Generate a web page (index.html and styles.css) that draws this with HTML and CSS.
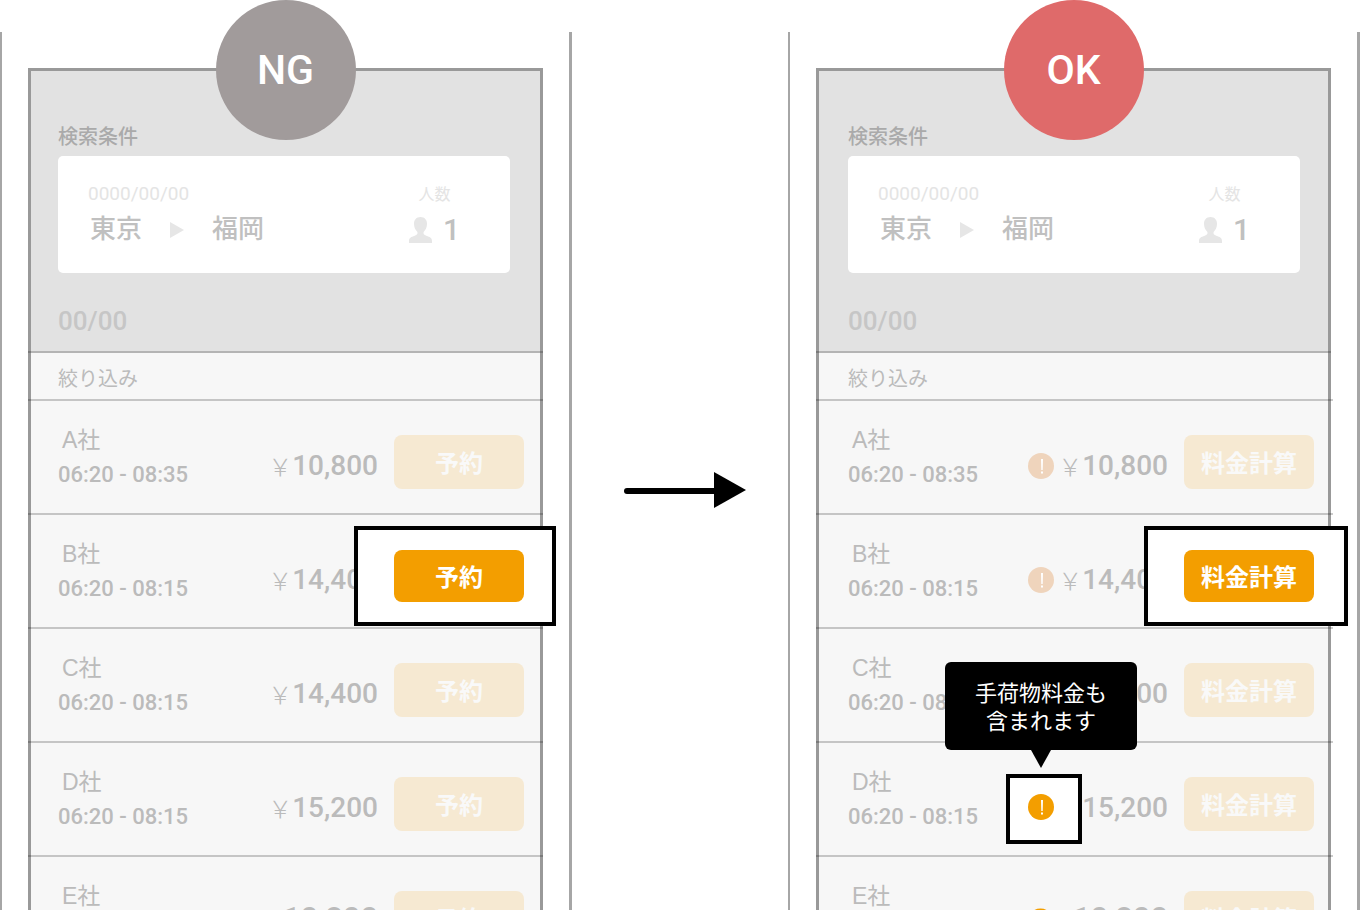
FILE: index.html
```html
<!DOCTYPE html>
<html lang="ja">
  <head>
    <meta charset="UTF-8" />
    <meta name="viewport" content="width=device-width, initial-scale=1.0" />
    <title>NG / OK</title>
    <link rel="stylesheet" href="styles.css">
  </head>
  <body>
    <svg class="defs" aria-hidden="true">
      <symbol id="person" viewBox="0 0 23 26">
        <path d="M11.5 0C7.400 0 5 2.800 5 6.800c0 3.400 1.300 6.200 3.400 8.300.5 2-.4 3-2.700 3.700C2 20 0 20.900 0 24v2h23v-2c0-3.100-2-4-5.700-5.200-2.300-.7-3.200-1.700-2.700-3.700C16.700 13 18 10.200 18 6.800 18 2.800 15.600 0 11.500 0z" />
      </symbol>
      <symbol id="info" viewBox="0 0 26 26">
        <circle cx="13" cy="13" r="13" />
        <path d="M13 6h2l-.3 11h-1.400zM13 18.500h2v2h-2z" fill="#fff" />
      </symbol>
    </svg>

    <main class="compare">
      <section class="phone">
        <h2 class="badge badge-ng">NG</h2>
        <div class="screen">
          <header class="search">
            <h3 class="search-label">検索条件</h3>
            <div class="card">
              <div>
                <div class="date">0000/00/00</div>
                <div class="route"><span>東京</span><i class="play"></i><span>福岡</span></div>
              </div>
              <div class="people">
                <div class="people-label">人数</div>
                <div class="people-count"><svg class="person"><use href="#person" /></svg>1</div>
              </div>
            </div>
            <div class="day">00/00</div>
          </header>
          <div class="filter">絞り込み</div>
          <ul class="flights">
            <li class="flight">
              <div class="info"><div class="company">A社</div><div class="time">06:20 - 08:35</div></div>
              <div class="price"><span class="yen">￥</span>10,800</div>
              <button class="btn">予約</button>
            </li>
            <li class="flight">
              <div class="info"><div class="company">B社</div><div class="time">06:20 - 08:15</div></div>
              <div class="price price-shift"><span class="yen">￥</span>14,400</div>
              <div class="focus focus-btn"><button class="btn btn-on">予約</button></div>
            </li>
            <li class="flight">
              <div class="info"><div class="company">C社</div><div class="time">06:20 - 08:15</div></div>
              <div class="price"><span class="yen">￥</span>14,400</div>
              <button class="btn">予約</button>
            </li>
            <li class="flight">
              <div class="info"><div class="company">D社</div><div class="time">06:20 - 08:15</div></div>
              <div class="price"><span class="yen">￥</span>15,200</div>
              <button class="btn">予約</button>
            </li>
            <li class="flight">
              <div class="info"><div class="company">E社</div></div>
              <div class="price price-big"><span class="yen">￥</span>10,800</div>
              <button class="btn">予約</button>
            </li>
          </ul>
        </div>
      </section>

      <div class="arrow">
        <svg width="122" height="36" viewBox="0 0 122 36">
          <path d="M3 19h88" stroke="#000" stroke-width="6" stroke-linecap="round" />
          <path d="M90 0l32 18-32 18z" />
        </svg>
      </div>

      <section class="phone phone-ok">
        <h2 class="badge badge-ok">OK</h2>
        <div class="screen">
          <header class="search">
            <h3 class="search-label">検索条件</h3>
            <div class="card">
              <div>
                <div class="date">0000/00/00</div>
                <div class="route"><span>東京</span><i class="play"></i><span>福岡</span></div>
              </div>
              <div class="people">
                <div class="people-label">人数</div>
                <div class="people-count"><svg class="person"><use href="#person" /></svg>1</div>
              </div>
            </div>
            <div class="day">00/00</div>
          </header>
          <div class="filter">絞り込み</div>
          <ul class="flights">
            <li class="flight">
              <div class="info"><div class="company">A社</div><div class="time">06:20 - 08:35</div></div>
              <div class="price"><svg class="mark"><use href="#info" /></svg><span class="yen">￥</span>10,800</div>
              <button class="btn">料金計算</button>
            </li>
            <li class="flight">
              <div class="info"><div class="company">B社</div><div class="time">06:20 - 08:15</div></div>
              <div class="price price-shift"><svg class="mark"><use href="#info" /></svg><span class="yen">￥</span>14,400</div>
              <div class="focus focus-btn"><button class="btn btn-on">料金計算</button></div>
            </li>
            <li class="flight">
              <div class="info"><div class="company">C社</div><div class="time">06:20 - 08:15</div></div>
              <div class="price"><span class="yen">￥</span>14,400</div>
              <button class="btn">料金計算</button>
            </li>
            <li class="flight">
              <div class="info"><div class="company">D社</div><div class="time">06:20 - 08:15</div></div>
              <div class="price"><span class="yen">￥</span>15,200</div>
              <button class="btn">料金計算</button>
              <div class="focus focus-mark">
                <svg class="mark mark-on"><use href="#info" /></svg>
                <div class="tooltip" role="tooltip">手荷物料金も<br />含まれます</div>
              </div>
            </li>
            <li class="flight">
              <div class="info"><div class="company">E社</div></div>
              <div class="price price-big"><svg class="mark mark-on"><use href="#info" /></svg><span class="yen">￥</span>10,800</div>
              <button class="btn">料金計算</button>
            </li>
          </ul>
        </div>
      </section>
    </main>
  </body>
</html>
```
FILE: styles.css
```css
* {
  box-sizing: border-box;
}

body {
  margin: 0;
  background: #fff;
  color: #bbb;
  font-family: "Noto Sans CJK JP", sans-serif;
}

h2,
h3,
ul {
  margin: 0;
  padding: 0;
  list-style: none;
}

.defs {
  display: none;
}

.compare {
  display: grid;
  grid-template-columns: 1fr 216px 1fr;
  height: 100vh;
  overflow: hidden;
}

.phone {
  position: relative;
  margin-top: 32px;
  padding: 36px 26px 0;
  border: solid #a6a6a6;
  border-width: 0 3px 0 2px;
}

.badge {
  position: absolute;
  z-index: 1;
  top: -32px;
  left: 50%;
  width: 140px;
  height: 140px;
  margin-left: -70px;
  border-radius: 50%;
  color: #fff;
  font: 500 41px/140px Roboto, sans-serif;
  text-align: center;
}

.badge-ng {
  background: #a19b9b;
}

.badge-ok {
  background: #df6a6a;
}

.screen {
  border: 3px solid #999;
  border-bottom: 0;
  background: #f7f7f7;
}

/* divider lines run over the side borders */
.search,
.filter,
.flight {
  position: relative;
  padding-left: 27px;
}

.search::after,
.filter::after,
.flight::after {
  content: "";
  position: absolute;
  bottom: 0;
  left: -3px;
  right: -3px;
  height: 2px;
  background: rgba(0, 0, 0, 0.2);
}

.search {
  padding: 53px 30px 17px 27px;
  background: #e2e2e2;
}

.search-label {
  margin-bottom: 8px;
  color: #aaa;
  font-size: 20px;
  font-weight: 500;
  line-height: 24px;
}

.card {
  display: flex;
  justify-content: space-between;
  height: 117px;
  padding: 24px 50px 0 30px;
  border-radius: 5px;
  background: #fff;
}

.date {
  color: #e4e4e4;
  font: 19px/28px Roboto, sans-serif;
}

.route {
  display: flex;
  align-items: center;
  gap: 28px;
  padding-left: 2px;
  color: #c0c0c0;
  font-size: 26px;
  font-weight: 500;
  line-height: 38px;
}

.play {
  margin-top: 5px;
  border: solid transparent;
  border-width: 8px 0 8px 14px;
  border-left-color: #e6e6e6;
}

.people {
  text-align: center;
}

.people-label {
  color: #e4e4e4;
  font-size: 16px;
  line-height: 26px;
}

.people-count {
  display: flex;
  align-items: center;
  gap: 11px;
  padding-top: 4px;
  color: #c0c0c0;
  font: 500 30px/40px Roboto, sans-serif;
}

.person {
  width: 23px;
  height: 26px;
  fill: #e6e6e6;
}

.day {
  margin-top: 33px;
  color: #c6c6c6;
  font: 500 26px/30px Roboto, sans-serif;
}

.filter {
  padding-top: 2px;
  font-size: 20px;
  line-height: 46px;
}

.flight {
  display: flex;
  align-items: flex-start;
  height: 114px;
  padding-right: 16px;
}

.info {
  flex: 1;
  padding-top: 25px;
}

.company {
  margin-left: 4px;
  font-family: "Liberation Sans", "Noto Sans CJK JP", sans-serif;
  font-size: 23px;
  line-height: 28px;
}

.time {
  margin-top: 7px;
  font: 500 22px/28px Roboto, sans-serif;
}

.price {
  display: flex;
  align-items: center;
  justify-content: flex-end;
  padding-top: 48px;
  font: 500 28px/34px Roboto, sans-serif;
}

.price-shift {
  margin-right: 146px;
}

.price-big {
  padding-top: 45px;
  font-size: 31px;
}

.yen {
  font: 300 24px/34px "Noto Sans CJK JP", sans-serif;
}

.price-big .yen {
  font-size: 20px;
}

.mark {
  width: 26px;
  height: 26px;
  margin-right: auto;
  fill: #efd4bc;
}

.mark-on {
  fill: #f39e00;
}

.price-big .mark {
  margin-top: 4px;
}

.btn {
  width: 130px;
  height: 54px;
  margin: 34px 0 0 16px;
  padding: 0 0 2px;
  border: 0;
  border-radius: 8px;
  background: #f6e9d2;
  color: #f9f9f9;
  font: 700 24px "Noto Sans CJK JP", sans-serif;
}

.focus {
  position: absolute;
  z-index: 1;
  border: 4px solid #000;
  background: #fff;
}

.focus-btn {
  top: 11px;
  right: -16px;
  padding: 20px 28px 20px 36px;
}

.btn-on {
  display: block;
  height: 52px;
  margin: 0;
  background: #f39e00;
  color: #fff;
}

.focus-mark {
  top: 31px;
  right: 246px;
  width: 76px;
  padding: 16px 18px 20px;
}

.focus-mark .mark {
  display: block;
  margin: 0;
}

.tooltip {
  position: absolute;
  bottom: calc(100% + 28px);
  left: -65px;
  width: 192px;
  padding: 15px 0 17px;
  border-radius: 6px;
  background: #000;
  color: #fff;
  font-size: 22px;
  line-height: 28px;
  text-align: center;
}

.tooltip::after {
  content: "";
  position: absolute;
  top: 100%;
  left: 50%;
  margin-left: -10px;
  border: solid transparent;
  border-width: 18px 10px 0;
  border-top-color: #000;
}

.arrow {
  padding: 472px 0 0 52px;
}

.phone-ok .search,
.phone-ok .filter,
.phone-ok .flight {
  padding-left: 29px;
}

.phone-ok .search {
  padding-right: 28px;
}

.phone-ok .flight {
  padding-right: 14px;
}

.phone-ok .price {
  width: 140px;
}

.phone-ok .filter::after,
.phone-ok .flight::after {
  right: -5px;
}

.phone-ok .focus-btn {
  right: -20px;
  padding-right: 30px;
}
```
